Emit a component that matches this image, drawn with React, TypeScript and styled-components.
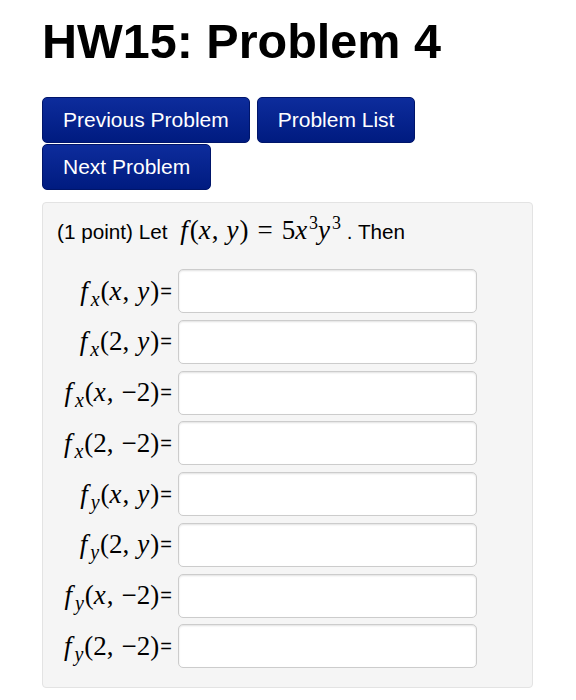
import React from 'react'
import styled, { createGlobalStyle } from 'styled-components'

const GlobalStyle = createGlobalStyle`
  body {
    margin: 0;
    background: #fff;
    font-family: "Liberation Sans", Arial, sans-serif;
    color: #000;
  }
`

type Arg = { text: string; italic?: boolean }

interface PartialRow {
  sub: 'x' | 'y'
  args: [Arg, Arg]
}

const X: Arg = { text: 'x', italic: true }
const Y: Arg = { text: 'y', italic: true }
const TWO: Arg = { text: '2' }
const NEG_TWO: Arg = { text: '\u22122' }

const rows: PartialRow[] = [
  { sub: 'x', args: [X, Y] },
  { sub: 'x', args: [TWO, Y] },
  { sub: 'x', args: [X, NEG_TWO] },
  { sub: 'x', args: [TWO, NEG_TWO] },
  { sub: 'y', args: [X, Y] },
  { sub: 'y', args: [TWO, Y] },
  { sub: 'y', args: [X, NEG_TWO] },
  { sub: 'y', args: [TWO, NEG_TWO] },
]

const MathArg: React.FC<{ arg: Arg }> = ({ arg }) =>
  arg.italic ? <Var>{arg.text}</Var> : <Num>{arg.text}</Num>

const App: React.FC = () => {
  return (
    <Page>
      <GlobalStyle />
      <Title>HW15: Problem 4</Title>

      <NavBar>
        <NavButton>Previous Problem</NavButton>
        <NavButton>Problem List</NavButton>
        <NavButton>Next Problem</NavButton>
      </NavBar>

      <ProblemPanel>
        <Intro>
          (1 point) Let{' '}
          <Math $inline>
            <FName>f</FName>(<Var>x</Var>
            <Comma>,</Comma>
            <Var>y</Var>)<Op>=</Op>5<Var>x</Var>
            <Sup>3</Sup>
            <Var>y</Var>
            <Sup>3</Sup>
          </Math>{' '}
          . Then
        </Intro>

        <AnswerGrid>
          {rows.map((row, i) => (
            <React.Fragment key={i}>
              <Label>
                <Math>
                  <FName>f</FName>
                  <Sub>{row.sub}</Sub>(<MathArg arg={row.args[0]} />
                  <Comma>,</Comma>
                  <MathArg arg={row.args[1]} />)
                </Math>
                <Equals>=</Equals>
              </Label>
              <AnswerInput type="text" aria-label={`answer ${i + 1}`} />
            </React.Fragment>
          ))}
        </AnswerGrid>
      </ProblemPanel>
    </Page>
  )
}

const Page = styled.div`
  padding: 0 43px 12px 42px;
`

const Title = styled.h1`
  margin: 13px 0 28px;
  font-size: 48.5px;
  line-height: 56px;
  font-weight: bold;
`

const NavBar = styled.div`
  display: flex;
  flex-wrap: wrap;
  column-gap: 7px;
  row-gap: 1px;
`

const NavButton = styled.button`
  height: 46px;
  padding: 0 20px;
  font-family: "Liberation Sans", Arial, sans-serif;
  font-size: 21px;
  color: #fff;
  background: linear-gradient(#0d2c9c, #001b80);
  border: 1px solid #00156a;
  border-radius: 5px;
  cursor: pointer;
`

const ProblemPanel = styled.div`
  margin-top: 12px;
  padding: 12px 14px 19px;
  background: #f5f5f5;
  border: 1px solid #e3e3e3;
  border-radius: 4px;
`

const Intro = styled.div`
  font-size: 20.7px;
  line-height: 30px;
`

const Math = styled.span<{ $inline?: boolean }>`
  font-family: "Liberation Serif", "Times New Roman", serif;
  font-size: 27px;
  white-space: nowrap;
  margin-left: ${(p) => (p.$inline ? '7px' : '0')};
`

const Var = styled.i`
  font-style: italic;
  padding-right: 1px;
`

const FName = styled.i`
  font-style: italic;
  padding-right: 2px;
`

const Num = styled.span``

const Comma = styled.span`
  margin-right: 8px;
`

const Op = styled.span`
  margin: 0 9px;
`

const Sup = styled.sup`
  font-size: 18px;
  vertical-align: 10px;
  line-height: 0;
  margin-left: 1px;
`

const Sub = styled.sub`
  font-size: 20px;
  font-style: italic;
  vertical-align: -6px;
  line-height: 0;
  margin: 0 1px 0 1px;
`

const AnswerGrid = styled.div`
  display: grid;
  grid-template-columns: 115px 299px;
  column-gap: 6px;
  row-gap: 6.75px;
  margin-top: 22px;
`

const Label = styled.div`
  display: flex;
  align-items: center;
  justify-content: flex-end;
  white-space: nowrap;
`

const Equals = styled.span`
  font-family: "Liberation Sans", Arial, sans-serif;
  font-size: 20px;
  margin-left: 1px;
`

const AnswerInput = styled.input`
  box-sizing: border-box;
  height: 44px;
  width: 100%;
  margin: 0;
  border: 1px solid #cccccc;
  border-radius: 5px;
  background: #fff;
  box-shadow: inset 0 1px 2px rgba(0, 0, 0, 0.12);
  font-size: 20px;
  padding: 0 8px;
`

export default App
